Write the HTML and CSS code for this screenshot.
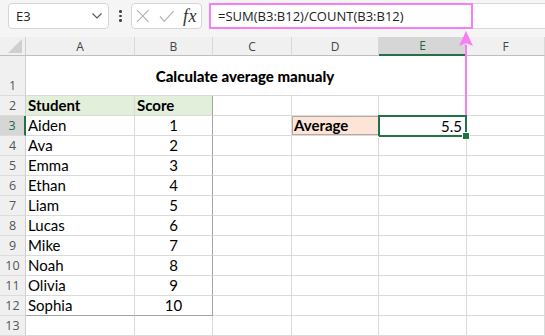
FILE: index.html
```html
<!DOCTYPE html>
<html>
<head>
<meta charset="utf-8">
<link rel="stylesheet" href="styles.css">
</head>
<body>
<div class="app">
  <div class="toolbar">
    <div class="namebox">
      <span class="ref">E3</span>
      <svg class="chev" width="10" height="6" viewBox="0 0 10 6"><polyline points="0.5,0.5 5,5 9.5,0.5" fill="none" stroke="#555" stroke-width="1.1"/></svg>
    </div>
    <div class="dots"><i></i><i></i><i></i></div>
    <div class="fxbox">
      <svg width="14" height="14" viewBox="0 0 14 14"><path d="M1 1L13 13M13 1L1 13" stroke="#b4b4b4" stroke-width="1.2" fill="none"/></svg>
      <svg width="16" height="13" viewBox="0 0 16 13"><polyline points="1,6.5 5.5,11.5 15,1" stroke="#b4b4b4" stroke-width="1.2" fill="none"/></svg>
      <span class="fx">fx</span>
    </div>
    <div class="formula">
      <span class="ftext">=SUM(B3:B12)/COUNT(B3:B12)</span>
      <div class="hl"></div>
    </div>
  </div>

  <div class="sheet">
    <div class="corner"><svg width="14" height="14" viewBox="0 0 14 14"><polygon points="14,0 14,14 0,14" fill="#cfcfcf"/></svg></div>
    <div class="ch">A</div><div class="ch">B</div><div class="ch">C</div><div class="ch">D</div><div class="ch sel">E</div><div class="ch">F</div>

    <div class="rh">1</div><div class="c title">Calculate average manualy</div>

    <div class="rh">2</div><div class="c hd">Student</div><div class="c hd tr">Score</div><div class="c"></div><div class="c"></div><div class="c"></div><div class="c"></div>

    <div class="rh sel">3</div><div class="c">Aiden</div><div class="c num tr">1</div><div class="c"></div><div class="c avg">Average</div><div class="c res">5.5<span class="handle"></span></div><div class="c"></div>
    <div class="rh">4</div><div class="c">Ava</div><div class="c num tr">2</div><div class="c"></div><div class="c"></div><div class="c"></div><div class="c"></div>
    <div class="rh">5</div><div class="c">Emma</div><div class="c num tr">3</div><div class="c"></div><div class="c"></div><div class="c"></div><div class="c"></div>
    <div class="rh">6</div><div class="c">Ethan</div><div class="c num tr">4</div><div class="c"></div><div class="c"></div><div class="c"></div><div class="c"></div>
    <div class="rh">7</div><div class="c">Liam</div><div class="c num tr">5</div><div class="c"></div><div class="c"></div><div class="c"></div><div class="c"></div>
    <div class="rh">8</div><div class="c">Lucas</div><div class="c num tr">6</div><div class="c"></div><div class="c"></div><div class="c"></div><div class="c"></div>
    <div class="rh">9</div><div class="c">Mike</div><div class="c num tr">7</div><div class="c"></div><div class="c"></div><div class="c"></div><div class="c"></div>
    <div class="rh">10</div><div class="c">Noah</div><div class="c num tr">8</div><div class="c"></div><div class="c"></div><div class="c"></div><div class="c"></div>
    <div class="rh">11</div><div class="c">Olivia</div><div class="c num tr">9</div><div class="c"></div><div class="c"></div><div class="c"></div><div class="c"></div>
    <div class="rh">12</div><div class="c tb">Sophia</div><div class="c num tr tb">10</div><div class="c"></div><div class="c"></div><div class="c"></div><div class="c"></div>
    <div class="rh">13</div><div class="c"></div><div class="c"></div><div class="c"></div><div class="c"></div><div class="c"></div><div class="c"></div>
  </div>

  <svg class="arrow" width="20" height="90" viewBox="0 0 20 90">
    <line x1="10" y1="14" x2="10" y2="84" stroke="#f77ef6" stroke-width="2"/>
    <polygon points="10,0 17,15 10,12 3,15" fill="#f77ef6"/>
  </svg>
</div>
</body>
</html>
```

FILE: styles.css
```css
html, body { margin: 0; padding: 0; background: #fff; }
.app {
  position: relative;
  width: 545px;
  height: 336px;
  overflow: hidden;
  font-family: "Lato", "Open Sans", sans-serif;
}
.toolbar {
  height: 37px;
  box-sizing: border-box;
  background: #f5f5f5;
  display: flex;
  align-items: flex-start;
  padding: 3px 0 0 8px;
}
.namebox {
  width: 101px;
  height: 26px;
  box-sizing: border-box;
  background: #fff;
  border: 1px solid #d6d6d6;
  border-radius: 4px;
  display: flex;
  align-items: center;
  justify-content: space-between;
  padding: 0 6px 0 7px;
  font-family: "Open Sans", sans-serif;
  font-size: 13px;
  color: #222;
}
.dots {
  width: 3px;
  margin: 0 9px 0 10px;
  height: 26px;
  display: flex;
  flex-direction: column;
  justify-content: center;
  gap: 2px;
}
.dots i { display: block; width: 2.5px; height: 2.5px; background: #444; border-radius: 50%; }
.fxbox {
  width: 71px;
  height: 26px;
  box-sizing: border-box;
  background: #fff;
  border: 1px solid #d6d6d6;
  border-radius: 4px;
  display: flex;
  align-items: center;
  padding: 0 4px 0 4px;
  gap: 9px;
}
.fx {
  font-family: "Liberation Serif", serif;
  font-style: italic;
  font-size: 18px;
  color: #333;
  letter-spacing: 0.5px;
}
.formula {
  position: relative;
  flex: 1;
  margin-left: 7px;
  height: 26px;
  box-sizing: border-box;
  background: #fff;
  border-top: 1px solid #d8d8d8;
  border-bottom: 1px solid #d8d8d8;
  display: flex;
  align-items: center;
  padding-left: 9px;
  font-family: "Open Sans", sans-serif;
  font-size: 13px;
  color: #222;
}
.hl {
  position: absolute;
  left: 0;
  top: -1px;
  width: 264px;
  height: 26px;
  box-sizing: border-box;
  border: 2px solid #f77ef6;
}
.sheet {
  display: grid;
  grid-template-columns: 26px 109px 78px 79px 87px 88px 1fr;
  grid-template-rows: 19px 40px repeat(12, 20px);
  font-size: 15px;
  color: #000;
}
.corner {
  background: #f0f0f0;
  border-right: 1px solid #cfcfcf;
  border-bottom: 1px solid #bfbfbf;
  display: flex;
  align-items: flex-end;
  justify-content: flex-end;
  padding: 0 3px 2px 0;
  box-sizing: border-box;
}
.ch {
  background: #f0f0f0;
  border-right: 1px solid #d9d9d9;
  border-bottom: 1px solid #bfbfbf;
  display: flex;
  align-items: center;
  justify-content: center;
  font-family: "Open Sans", sans-serif;
  font-size: 12px;
  color: #444;
  box-sizing: border-box;
}
.ch.sel {
  background: #d6d6d6;
  border-bottom: 2px solid #217346;
  color: #1d6a40;
}
.rh {
  background: #f0f0f0;
  border-right: 1px solid #cfcfcf;
  border-bottom: 1px solid #dcdcdc;
  display: flex;
  align-items: flex-end;
  justify-content: center;
  font-family: "Open Sans", sans-serif;
  font-size: 12.5px;
  color: #555;
  box-sizing: border-box;
  line-height: 19px;
}
.rh.sel {
  background: #d6d6d6;
  border-right: 2px solid #217346;
  color: #1d6a40;
}
.c {
  border-right: 1px solid #dadada;
  border-bottom: 1px solid #dadada;
  box-sizing: border-box;
  display: flex;
  align-items: flex-end;
  padding: 0 3px 1px 2px;
  line-height: 18px;
  white-space: nowrap;
  position: relative;
}
.title {
  grid-column: 2 / 8;
  justify-content: center;
  align-items: center;
  font-weight: 900;
  font-size: 15px;
  padding: 0 80px 0 0;
}
.hd { background: #e2efda; font-weight: 700; }
.num { justify-content: center; padding-left: 3px; }
.tr { border-right-color: #a3a3a3; }
.tb { border-bottom-color: #a3a3a3; }
.avg {
  background: #fce4d6;
  font-weight: 700;
  box-shadow: inset 1px 1px 0 #b5aaa4, inset 0 -1px 0 #b5aaa4;
}
.res {
  justify-content: flex-end;
  border: none;
  box-shadow: inset 0 0 0 2px #217346;
  margin: -1px 0 -1px -1px;
  padding-right: 5px;
  padding-bottom: 2px;
}
.handle {
  position: absolute;
  right: -3px;
  bottom: -3px;
  width: 6px;
  height: 6px;
  background: #217346;
  border: 1px solid #fff;
  z-index: 2;
}
.arrow {
  position: absolute;
  left: 456px;
  top: 31px;
}
```
